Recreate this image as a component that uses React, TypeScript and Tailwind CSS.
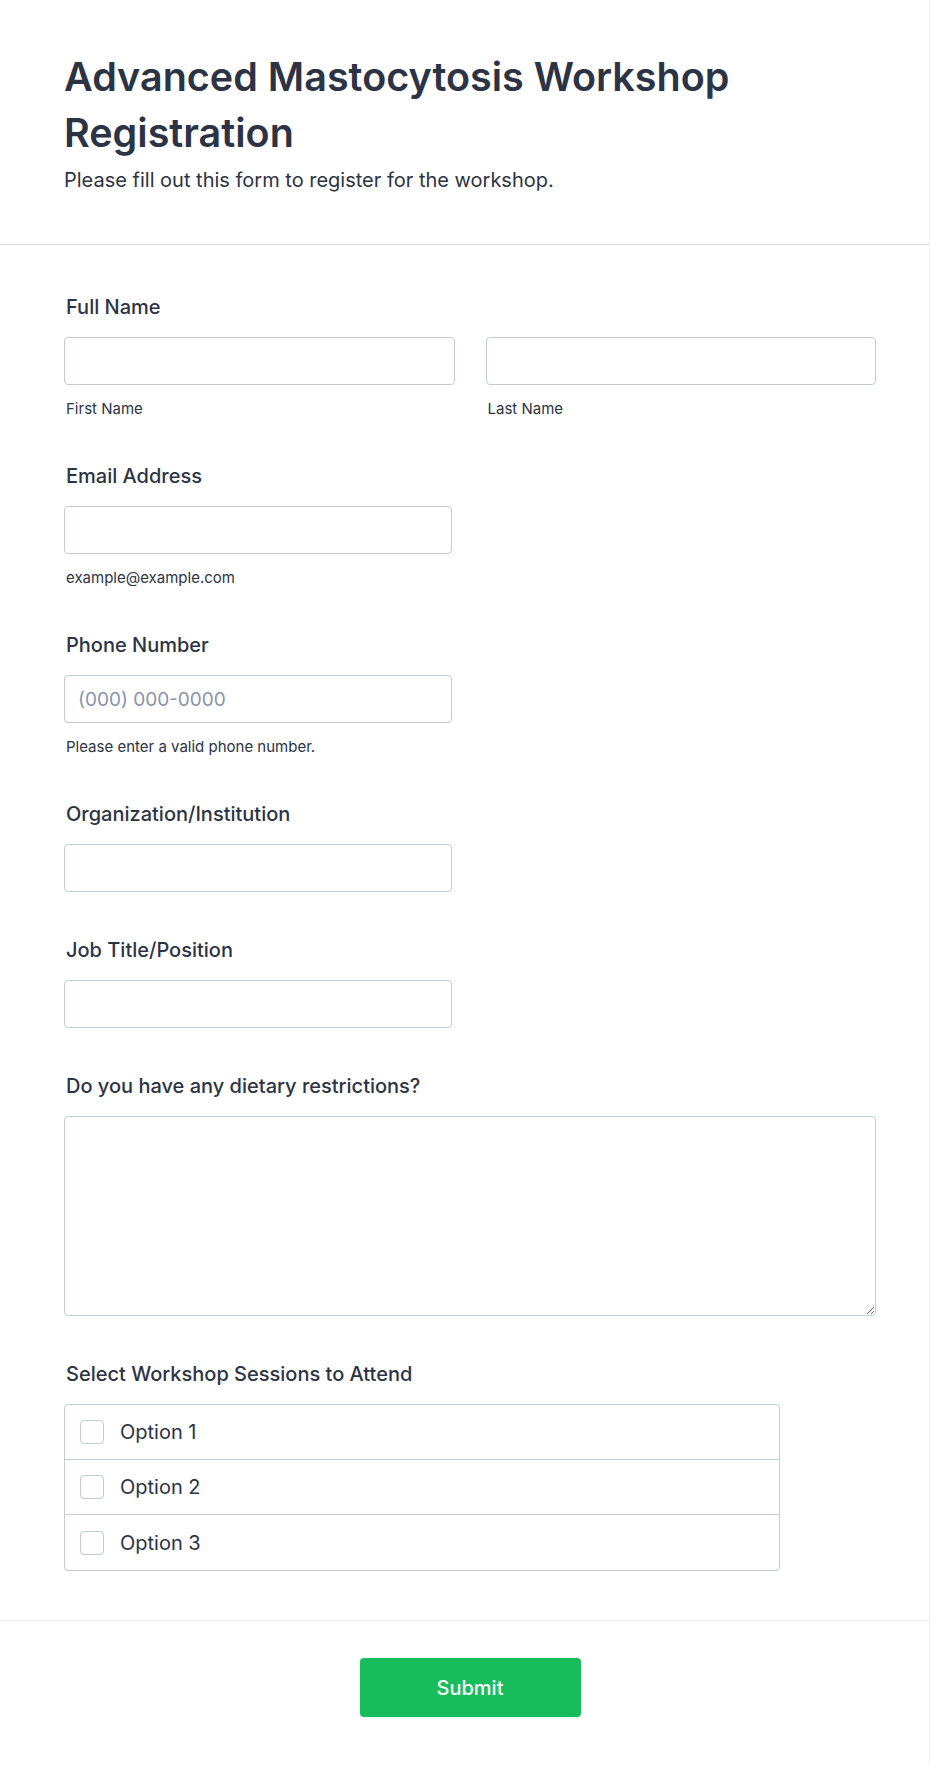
import React from 'react';

const font = { fontFamily: 'Inter, "Noto Sans", sans-serif' };

const inputCls =
  'block h-[48px] w-full rounded-[4px] border border-[#c3cad8] bg-white px-[13px] text-[19px] text-[#2c3345] outline-none placeholder:text-[#8894ab]';

function Label({ children }: { children: React.ReactNode }) {
  return <div className="mb-[18px] px-[2px] text-[20px] font-medium leading-[24px] text-[#2c3345]">{children}</div>;
}

function Hint({ children }: { children: React.ReactNode }) {
  return <div className="mt-[15px] px-[2px] text-[15px] leading-[18px] text-[#2c3345]">{children}</div>;
}

export default function App() {
  const options = ['Option 1', 'Option 2', 'Option 3'];

  return (
    <div className="min-h-[1766px] w-full border-r border-[#efefef] bg-white" style={font}>
      <div className="pl-[64px] pr-[53px] pb-[52px] pt-[49px]">
        <h1 className="text-[39.5px] font-semibold leading-[56px] text-[#2c3345]">
          Advanced Mastocytosis Workshop Registration
        </h1>
        <p className="mt-[7px] text-[20px] leading-[24px] text-[#2c3345]">
          Please fill out this form to register for the workshop.
        </p>
      </div>

      <div className="border-t border-[#d9d9de]" />

      <form className="flex flex-col gap-[46px] pl-[64px] pr-[53px] pb-[49px] pt-[50px]">
        <div>
          <Label>Full Name</Label>
          <div className="grid grid-cols-2 gap-[31px]">
            <div>
              <input className={inputCls} />
              <Hint>First Name</Hint>
            </div>
            <div>
              <input className={inputCls} />
              <Hint>Last Name</Hint>
            </div>
          </div>
        </div>

        <div>
          <Label>Email Address</Label>
          <div className="w-[388px]">
            <input className={inputCls} />
            <Hint>example@example.com</Hint>
          </div>
        </div>

        <div>
          <Label>Phone Number</Label>
          <div className="w-[388px]">
            <input className={inputCls} placeholder="(000) 000-0000" />
            <Hint>Please enter a valid phone number.</Hint>
          </div>
        </div>

        <div>
          <Label>Organization/Institution</Label>
          <div className="w-[388px]">
            <input className={inputCls} />
          </div>
        </div>

        <div>
          <Label>Job Title/Position</Label>
          <div className="w-[388px]">
            <input className={inputCls} />
          </div>
        </div>

        <div>
          <Label>Do you have any dietary restrictions?</Label>
          <textarea className="block h-[200px] w-full rounded-[4px] border border-[#c3cad8] bg-white px-[13px] py-[10px] text-[19px] text-[#2c3345] outline-none" />
        </div>

        <div>
          <Label>Select Workshop Sessions to Attend</Label>
          <div className="w-[716px] rounded-[4px] border border-[#c3cad8]">
            {options.map((o, i) => (
              <label
                key={o}
                className={
                  'flex h-[55px] items-center gap-[16px] px-[15px] ' +
                  (i < options.length - 1 ? 'border-b border-[#c3cad8]' : '')
                }
              >
                <span className="block h-[24px] w-[24px] rounded-[4px] border border-[#c3cad8] bg-white" />
                <span className="text-[20px] text-[#2c3345]">{o}</span>
              </label>
            ))}
          </div>
        </div>
      </form>

      <div className="border-t border-[#ececee]" />

      <div className="flex justify-center pl-[64px] pr-[53px] pt-[37px] pb-[50px]">
        <button
          type="button"
          className="h-[59px] w-[221px] rounded-[4px] bg-[#18bd5b] text-[20px] font-medium text-white"
        >
          Submit
        </button>
      </div>
    </div>
  );
}
